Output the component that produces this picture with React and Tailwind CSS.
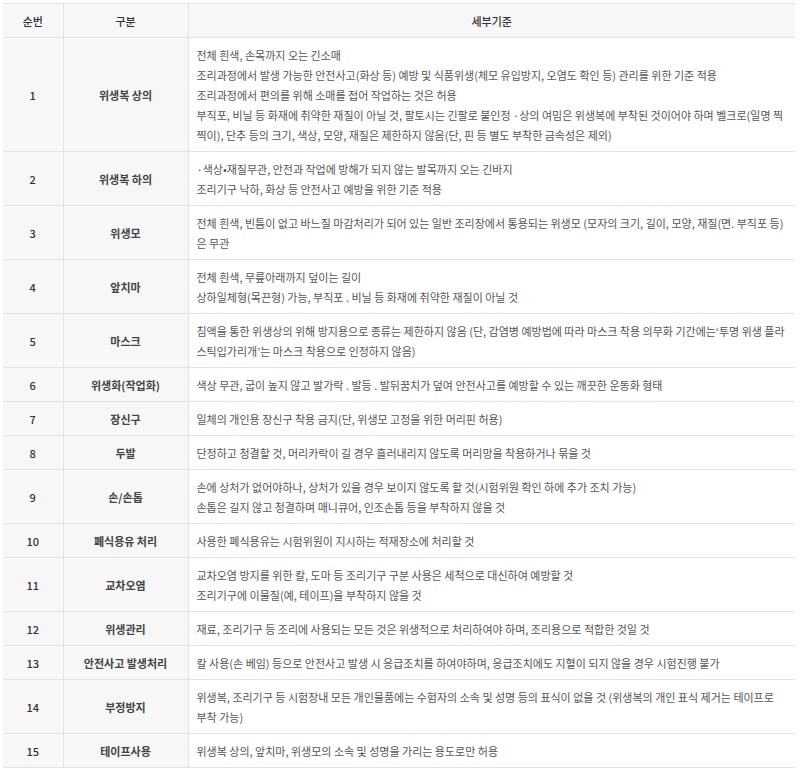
const rows = [
  {
    no: 1,
    name: "위생복 상의",
    lines: [
      "전체 흰색, 손목까지 오는 긴소매",
      "조리과정에서 발생 가능한 안전사고(화상 등) 예방 및 식품위생(체모 유입방지, 오염도 확인 등) 관리를 위한 기준 적용",
      "조리과정에서 편의를 위해 소매를 접어 작업하는 것은 허용",
      "부직포, 비닐 등 화재에 취약한 재질이 아닐 것, 팔토시는 긴팔로 불인정 ·상의 여밈은 위생복에 부착된 것이어야 하며 벨크로(일명 찍찍이), 단추 등의 크기, 색상, 모양, 재질은 제한하지 않음(단, 핀 등 별도 부착한 금속성은 제외)",
    ],
  },
  {
    no: 2,
    name: "위생복 하의",
    lines: [
      "·색상•재질무관, 안전과 작업에 방해가 되지 않는 발목까지 오는 긴바지",
      "조리기구 낙하, 화상 등 안전사고 예방을 위한 기준 적용",
    ],
  },
  {
    no: 3,
    name: "위생모",
    lines: [
      "전체 흰색, 빈틈이 없고 바느질 마감처리가 되어 있는 일반 조리장에서 통용되는 위생모 (모자의 크기, 길이, 모양, 재질(면. 부직포 등)은 무관",
    ],
  },
  {
    no: 4,
    name: "앞치마",
    lines: [
      "전체 흰색, 무릎아래까지 덮이는 길이",
      "상하일체형(목끈형) 가능, 부직포 . 비닐 등 화재에 취약한 재질이 아닐 것",
    ],
  },
  {
    no: 5,
    name: "마스크",
    lines: [
      "침액을 통한 위생상의 위해 방지용으로 종류는 제한하지 않음 (단, 감염병 예방법에 따라 마스크 착용 의무화 기간에는‘투명 위생 플라스틱입가리개’는 마스크 착용으로 인정하지 않음)",
    ],
  },
  {
    no: 6,
    name: "위생화(작업화)",
    lines: ["색상 무관, 굽이 높지 않고 발가락 . 발등 . 발뒤꿈치가 덮여 안전사고를 예방할 수 있는 깨끗한 운동화 형태"],
  },
  {
    no: 7,
    name: "장신구",
    lines: ["일체의 개인용 장신구 착용 금지(단, 위생모 고정을 위한 머리핀 허용)"],
  },
  {
    no: 8,
    name: "두발",
    lines: ["단정하고 청결할 것, 머리카락이 길 경우 흘러내리지 않도록 머리망을 착용하거나 묶을 것"],
  },
  {
    no: 9,
    name: "손/손톱",
    lines: [
      "손에 상처가 없어야하나, 상처가 있을 경우 보이지 않도록 할 것(시험위원 확인 하에 추가 조치 가능)",
      "손톱은 길지 않고 청결하며 매니큐어, 인조손톱 등을 부착하지 않을 것",
    ],
  },
  {
    no: 10,
    name: "폐식용유 처리",
    lines: ["사용한 폐식용유는 시험위원이 지시하는 적재장소에 처리할 것"],
  },
  {
    no: 11,
    name: "교차오염",
    lines: [
      "교차오염 방지를 위한 칼, 도마 등 조리기구 구분 사용은 세척으로 대신하여 예방할 것",
      "조리기구에 이물질(예, 테이프)을 부착하지 않을 것",
    ],
  },
  {
    no: 12,
    name: "위생관리",
    lines: ["재료, 조리기구 등 조리에 사용되는 모든 것은 위생적으로 처리하여야 하며, 조리용으로 적합한 것일 것"],
  },
  {
    no: 13,
    name: "안전사고 발생처리",
    lines: ["칼 사용(손 베임) 등으로 안전사고 발생 시 응급조치를 하여야하며, 응급조치에도 지혈이 되지 않을 경우 시험진행 불가"],
  },
  {
    no: 14,
    name: "부정방지",
    lines: [
      "위생복, 조리기구 등 시험장내 모든 개인물품에는 수험자의 소속 및 성명 등의 표식이 없을 것 (위생복의 개인 표식 제거는 테이프로 부착 가능)",
    ],
  },
  {
    no: 15,
    name: "테이프사용",
    lines: ["위생복 상의, 앞치마, 위생모의 소속 및 성명을 가리는 용도로만 허용"],
  },
];

export default function App() {
  return (
    <div
      className="bg-white pt-[3px] pl-[3px] pr-[5px]"
      style={{ fontFamily: '"Noto Sans CJK KR", "Noto Sans", sans-serif' }}
    >
      <table className="w-[792px] border-collapse table-fixed text-[11px] leading-[20px]">
        <colgroup>
          <col className="w-[60px]" />
          <col className="w-[125px]" />
          <col />
        </colgroup>
        <thead>
          <tr className="bg-[#f7f7f7] text-[#333]">
            <th className="border-t border-b border-r border-[#e3e3e3] font-medium pt-[7px] pb-[6px]">순번</th>
            <th className="border-t border-b border-r border-[#e3e3e3] font-medium pt-[7px] pb-[6px]">구분</th>
            <th className="border-t border-b border-[#e3e3e3] font-medium pt-[7px] pb-[6px]">세부기준</th>
          </tr>
        </thead>
        <tbody>
          {rows.map((r) => (
            <tr key={r.no}>
              <td className="bg-[#f7f7f7] border-b border-r border-[#e3e3e3] text-center font-medium text-[#333] pt-[7px] pb-[6px]">
                {r.no}
              </td>
              <td className="bg-[#f7f7f7] border-b border-r border-[#e3e3e3] text-center font-bold text-[#444] pt-[7px] pb-[6px]">
                {r.name}
              </td>
              <td className="border-b border-[#e3e3e3] text-[#555] pl-[8px] pr-[10px] pt-[7px] pb-[6px]">
                {r.lines.map((l, i) => (
                  <div key={i}>{l}</div>
                ))}
              </td>
            </tr>
          ))}
        </tbody>
      </table>
    </div>
  );
}
